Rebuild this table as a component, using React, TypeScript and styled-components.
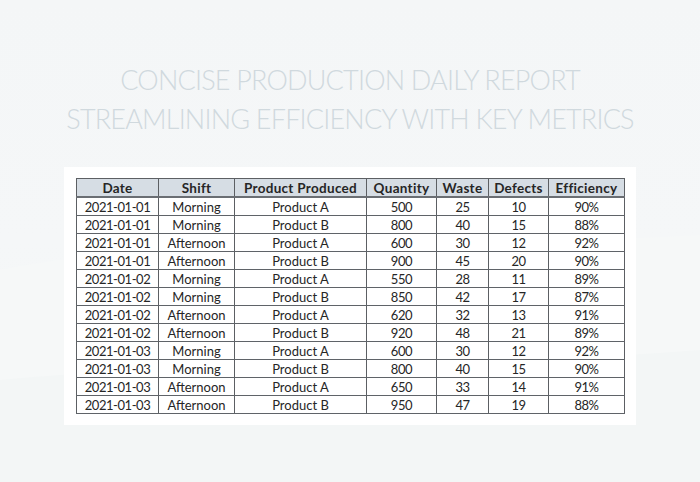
import React from "react";
import styled, { createGlobalStyle } from "styled-components";

const Global = createGlobalStyle`
  html, body { margin: 0; padding: 0; }
  body { background: #f4f6f7; font-family: Lato, "Open Sans", sans-serif; }
`;

const Page = styled.div`
  width: 700px;
  height: 482px;
  overflow: hidden;
  position: relative;
  display: flex;
  flex-direction: column;
  align-items: center;
  background: linear-gradient(180deg, #f4f6f7 0%, #f5f7f8 50%, #f3f6f6 100%);
`;

const Wave = styled.svg`
  position: absolute;
  left: 0;
  top: 0;
  width: 700px;
  height: 482px;
  pointer-events: none;
`;

const Title = styled.h1`
  position: relative;
  margin: 60px 0 0;
  font-family: Lato, sans-serif;
  font-weight: 300;
  font-size: 27px;
  line-height: 39px;
  color: #d0d9de;
  text-align: center;
  letter-spacing: -0.8px;
  white-space: nowrap;
`;

const Card = styled.div`
  position: relative;
  margin-top: 29px;
  width: 572px;
  box-sizing: border-box;
  padding: 11px 12px 11px 12px;
  background: #ffffff;
`;

const Table = styled.table`
  border-collapse: collapse;
  width: 548px;
  table-layout: fixed;
  font-family: Lato, sans-serif;
  font-size: 13px;
  color: #262626;
`;

const Th = styled.th`
  height: 17px;
  padding: 0;
  background: #d6dde4;
  border: 1px solid #5c5f63;
  border-bottom: 2px solid #6a6e73;
  font-weight: 700;
  font-size: 13.5px;
  letter-spacing: 0.3px;
  text-align: center;
  line-height: 16px;
  white-space: nowrap;
`;

const Td = styled.td<{ $num?: boolean }>`
  height: 17px;
  padding: 0;
  border: 1px solid #5c5f63;
  border-bottom: 1px solid #5f6368;
  text-align: center;
  line-height: 16px;
  font-weight: 400;
  letter-spacing: ${(p) => (p.$num ? "-0.45px" : "0")};
`;

const cols = [82, 76, 132, 70, 52, 60, 76];
const headers = ["Date", "Shift", "Product Produced", "Quantity", "Waste", "Defects", "Efficiency"];
const rows: string[][] = [
  ["2021-01-01", "Morning", "Product A", "500", "25", "10", "90%"],
  ["2021-01-01", "Morning", "Product B", "800", "40", "15", "88%"],
  ["2021-01-01", "Afternoon", "Product A", "600", "30", "12", "92%"],
  ["2021-01-01", "Afternoon", "Product B", "900", "45", "20", "90%"],
  ["2021-01-02", "Morning", "Product A", "550", "28", "11", "89%"],
  ["2021-01-02", "Morning", "Product B", "850", "42", "17", "87%"],
  ["2021-01-02", "Afternoon", "Product A", "620", "32", "13", "91%"],
  ["2021-01-02", "Afternoon", "Product B", "920", "48", "21", "89%"],
  ["2021-01-03", "Morning", "Product A", "600", "30", "12", "92%"],
  ["2021-01-03", "Morning", "Product B", "800", "40", "15", "90%"],
  ["2021-01-03", "Afternoon", "Product A", "650", "33", "14", "91%"],
  ["2021-01-03", "Afternoon", "Product B", "950", "47", "19", "88%"],
];

export default function App() {
  return (
    <>
      <Global />
      <Page>
        <Wave viewBox="0 0 700 482">
          <path d="M0 270 C 200 230, 450 250, 700 235 L700 482 L0 482 Z" fill="#f6f8f8" />
          <path d="M0 380 C 200 360, 450 370, 700 350 L700 482 L0 482 Z" fill="#f3f6f6" />
        </Wave>
        <Title>
          CONCISE PRODUCTION DAILY REPORT
          <br />
          STREAMLINING EFFICIENCY WITH KEY METRICS
        </Title>
        <Card>
          <Table>
            <colgroup>
              {cols.map((w, i) => (
                <col key={i} style={{ width: w }} />
              ))}
            </colgroup>
            <thead>
              <tr>
                {headers.map((h) => (
                  <Th key={h}>{h}</Th>
                ))}
              </tr>
            </thead>
            <tbody>
              {rows.map((r, i) => (
                <tr key={i}>
                  {r.map((c, j) => (
                    <Td key={j} $num={j !== 1 && j !== 2}>
                      {c}
                    </Td>
                  ))}
                </tr>
              ))}
            </tbody>
          </Table>
        </Card>
      </Page>
    </>
  );
}
